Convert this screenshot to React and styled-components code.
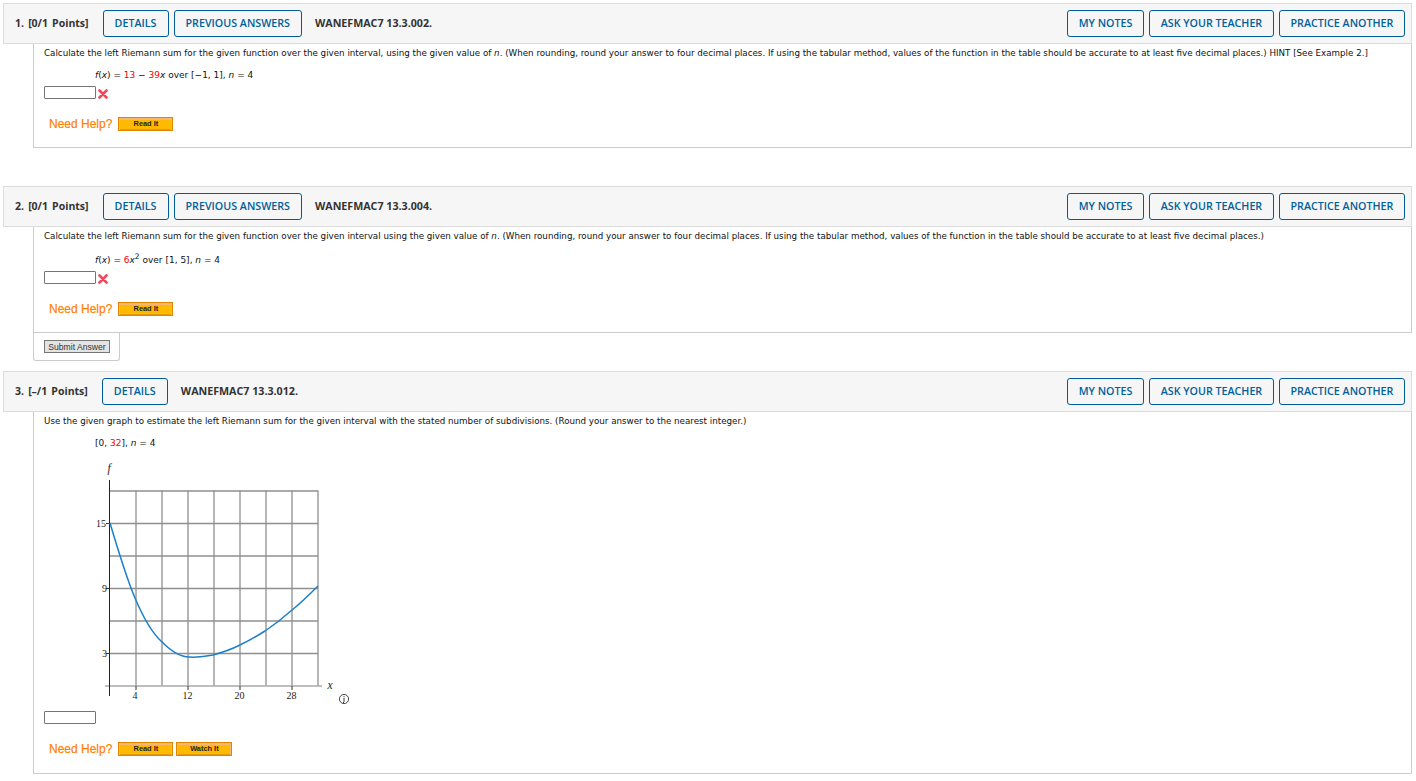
import styled, { createGlobalStyle } from "styled-components"

const Global = createGlobalStyle`
  html, body {
    margin: 0;
    padding: 0;
    background: #ffffff;
  }
  * { box-sizing: border-box; }
`

const questions = [
  {
    num: "1.",
    points: "[0/1 Points]",
    code: "WANEFMAC7 13.3.002.",
    prev: true,
  },
  {
    num: "2.",
    points: "[0/1 Points]",
    code: "WANEFMAC7 13.3.004.",
    prev: true,
  },
  {
    num: "3.",
    points: "[\u2013/1 Points]",
    code: "WANEFMAC7 13.3.012.",
    prev: false,
  },
]

function Header({ q }) {
  return (
    <HeaderBar>
      <Label>{q.num} {q.points}</Label>
      <HeaderButton>DETAILS</HeaderButton>
      {q.prev && <HeaderButton>PREVIOUS ANSWERS</HeaderButton>}
      <Code>{q.code}</Code>
      <RightButtons>
        <HeaderButton>MY NOTES</HeaderButton>
        <HeaderButton>ASK YOUR TEACHER</HeaderButton>
        <HeaderButton>PRACTICE ANOTHER</HeaderButton>
      </RightButtons>
    </HeaderBar>
  )
}

function Wrong() {
  return (
    <WrongIcon viewBox="0 0 10 10">
      <path d="M1.5 1.5 L8.5 8.5 M8.5 1.5 L1.5 8.5" stroke="#f2485c" strokeWidth="2.6" strokeLinecap="round" />
    </WrongIcon>
  )
}

function Help({ watch }) {
  return (
    <HelpRow>
      <HelpText>Need Help?</HelpText>
      <HelpButton>Read It</HelpButton>
      {watch && <HelpButton $wide>Watch It</HelpButton>}
    </HelpRow>
  )
}

function Graph() {
  const vertical = [136, 162, 188, 214, 240, 266, 292, 318]
  const horizontal = [491, 523.5, 556, 588.5, 621, 653.5]
  return (
    <GraphSvg viewBox="95 460 260 250">
      {horizontal.map(y => (
        <line key={y} x1="110" x2="318" y1={y} y2={y} stroke="#8f8f8f" strokeWidth="1.3" />
      ))}
      {vertical.map(x => (
        <line key={x} x1={x} x2={x} y1="490.5" y2="686" stroke="#8f8f8f" strokeWidth="1.3" />
      ))}
      <line x1="105" x2="322" y1="686" y2="686" stroke="#a8a8a8" strokeWidth="1.4" />
      <line x1="109.5" x2="109.5" y1="480" y2="696" stroke="#222" strokeWidth="1" />
      {[136, 188, 240, 292].map(x => (
        <line key={x} x1={x} x2={x} y1="686" y2="690" stroke="#333" strokeWidth="1" />
      ))}
      {[523.5, 588.5, 653.5].map(y => (
        <line key={y} x1="106" x2="110" y1={y} y2={y} stroke="#333" strokeWidth="1" />
      ))}
      <path
        d="M110 523 C118 550 126 577 135 598 C143 617 152 633 162 642 C170 650 180 657 189 657 C198 657.5 206 656.5 213 655 C222 652.5 232 649 240 645 C249 641 257 636 265 631 C274 625 283 618 292 610 C301 603 310 594 318 586"
        fill="none"
        stroke="#1b7fc9"
        strokeWidth="1.5"
      />
      <GraphText x="101" y="527" textAnchor="middle">15</GraphText>
      <GraphText x="104.5" y="592" textAnchor="middle">9</GraphText>
      <GraphText x="104.5" y="657" textAnchor="middle">3</GraphText>
      <GraphText x="135" y="699" textAnchor="middle">4</GraphText>
      <GraphText x="187.5" y="699" textAnchor="middle">12</GraphText>
      <GraphText x="239.5" y="699" textAnchor="middle">20</GraphText>
      <GraphText x="291.5" y="699" textAnchor="middle">28</GraphText>
      <GraphText x="109" y="472" textAnchor="middle" fontStyle="italic" $big>f</GraphText>
      <GraphText x="330" y="689" textAnchor="middle" fontStyle="italic" $big>x</GraphText>
      <circle cx="344" cy="699" r="4.6" fill="none" stroke="#333" strokeWidth="0.9" />
      <path d="M344 697.8 V701.6 M343.2 703 L344 701.6" stroke="#333" strokeWidth="1" fill="none" />
      <circle cx="344" cy="696.3" r="0.6" fill="#333" />
    </GraphSvg>
  )
}

export default function App() {
  return (
    <Page>
      <Global />
      <Question>
        <Header q={questions[0]} />
        <Body $h={104}>
          <Prompt>
            Calculate the left Riemann sum for the given function over the given interval, using the given value of <i>n</i>. (When rounding, round your answer to four decimal places. If using the tabular method, values of the function in the table should be accurate to at least five decimal places.) HINT [See Example 2.]
          </Prompt>
          <Formula $top={10}>
            <i>f</i>(<i>x</i>) = <Red>13</Red> − <Red>39</Red><i>x</i> over [−1, 1], <i>n</i> = 4
          </Formula>
          <AnswerRow>
            <AnswerBox />
            <Wrong />
          </AnswerRow>
          <Help />
        </Body>
      </Question>

      <Question $top={38}>
        <Header q={questions[1]} />
        <Body $h={106}>
          <Prompt>
            Calculate the left Riemann sum for the given function over the given interval using the given value of <i>n</i>. (When rounding, round your answer to four decimal places. If using the tabular method, values of the function in the table should be accurate to at least five decimal places.)
          </Prompt>
          <Formula $top={12}>
            <i>f</i>(<i>x</i>) = <Red>6</Red><i>x</i><Sup>2</Sup> over [1, 5], <i>n</i> = 4
          </Formula>
          <AnswerRow>
            <AnswerBox />
            <Wrong />
          </AnswerRow>
          <Help />
        </Body>
        <SubmitBox>
          <SubmitButton>Submit Answer</SubmitButton>
        </SubmitBox>
      </Question>

      <Question $top={10}>
        <Header q={questions[2]} />
        <Body $h={362}>
          <Prompt>
            Use the given graph to estimate the left Riemann sum for the given interval with the stated number of subdivisions. (Round your answer to the nearest integer.)
          </Prompt>
          <Formula $top={10}>
            [0, <Red>32</Red>], <i>n</i> = 4
          </Formula>
          <Graph />
          <AnswerRow $top={0}>
            <AnswerBox />
          </AnswerRow>
          <Help watch />
        </Body>
      </Question>
    </Page>
  )
}

const Page = styled.div`
  width: 1416px;
  height: 781px;
  overflow: hidden;
  padding: 3px 4px 0 3px;
`

const Question = styled.section`
  margin-top: ${p => p.$top || 0}px;
`

const HeaderBar = styled.div`
  height: 41px;
  background: #f6f6f6;
  border: 1px solid #dcdcdc;
  display: flex;
  align-items: center;
  gap: 5px;
  padding: 0 6px 1px 11px;
`

const Label = styled.div`
  font-family: "Open Sans", sans-serif;
  font-size: 10.5px;
  font-weight: 700;
  color: #333333;
  margin-right: 9px;
  white-space: pre;
  word-spacing: 1.4px;
`

const HeaderButton = styled.button`
  height: 27px;
  min-width: 66px;
  padding: 0 11px 1px;
  background: transparent;
  border: 1px solid #005c93;
  border-radius: 3px;
  font-family: "Open Sans", sans-serif;
  font-size: 10.7px;
  font-weight: 600;
  color: #00609c;
  white-space: nowrap;
`

const Code = styled.div`
  font-family: "Open Sans", sans-serif;
  font-size: 10.7px;
  font-weight: 700;
  color: #333333;
  margin-left: 8px;
`

const RightButtons = styled.div`
  margin-left: auto;
  display: flex;
  gap: 5px;

  button {
    padding: 0 10.7px 1px;
  }
`

const Body = styled.div`
  height: ${p => p.$h}px;
  margin-left: 30px;
  border: 1px solid #cccccc;
  border-top: none;
  padding: 4px 10px 0;
  font-family: "DejaVu Sans", Verdana, sans-serif;
  font-size: 8.73px;
  color: #111111;
`

const Prompt = styled.div`
  line-height: 11px;
  white-space: nowrap;
`

const Formula = styled.div`
  margin-top: ${p => p.$top}px;
  margin-left: 51px;
  font-size: 9px;
  line-height: 12px;
  white-space: nowrap;
`

const Red = styled.span`
  color: #f00000;
`

const Sup = styled.sup`
  font-size: 7.5px;
  line-height: 0;
`

const AnswerRow = styled.div`
  margin-top: ${p => p.$top ?? 4}px;
  display: flex;
  align-items: center;
  gap: 2px;
  height: 14px;
`

const AnswerBox = styled.div`
  width: 52px;
  height: 13px;
  background: #ffffff;
  border: 1px solid #767676;
  border-radius: 1px;
`

const WrongIcon = styled.svg`
  width: 10px;
  height: 10px;
  margin-top: 3px;
`

const HelpRow = styled.div`
  margin-top: 17px;
  margin-left: 5px;
  display: flex;
  align-items: center;
  gap: 3px;
  height: 15px;
`

const HelpText = styled.span`
  font-family: "Liberation Sans", Arial, sans-serif;
  font-size: 12px;
  color: #ff8000;
  margin-right: 3px;
  -webkit-text-stroke: 0.2px #ff8000;
`

const HelpButton = styled.div`
  width: ${p => (p.$wide ? 56 : 55)}px;
  height: 14px;
  background: #ffba00;
  border: 1px solid #e08500;
  box-shadow: inset 0 1px 0 1px #f6b870, inset 0 -1px 0 #e59a10;
  display: flex;
  align-items: center;
  justify-content: center;
  font-family: "Liberation Sans", Arial, sans-serif;
  font-size: 7.4px;
  font-weight: 700;
  color: #222222;
`

const SubmitBox = styled.div`
  width: 87px;
  height: 28px;
  margin-left: 30px;
  border: 1px solid #cccccc;
  border-top: none;
  border-radius: 0 0 3px 3px;
  padding: 7px 0 0 10px;
`

const SubmitButton = styled.div`
  width: 66px;
  height: 13px;
  background: #e4e4e4;
  border: 1px solid #767676;
  display: flex;
  align-items: center;
  justify-content: center;
  font-family: "Liberation Sans", Arial, sans-serif;
  font-size: 8.6px;
  color: #333333;
`

const GraphSvg = styled.svg`
  display: block;
  width: 260px;
  height: 250px;
  margin-top: 11px;
  margin-left: 51px;
`

const GraphText = styled.text`
  font-family: "Liberation Serif", serif;
  font-size: ${p => (p.$big ? 11.5 : 10)}px;
  fill: #222222;
`
